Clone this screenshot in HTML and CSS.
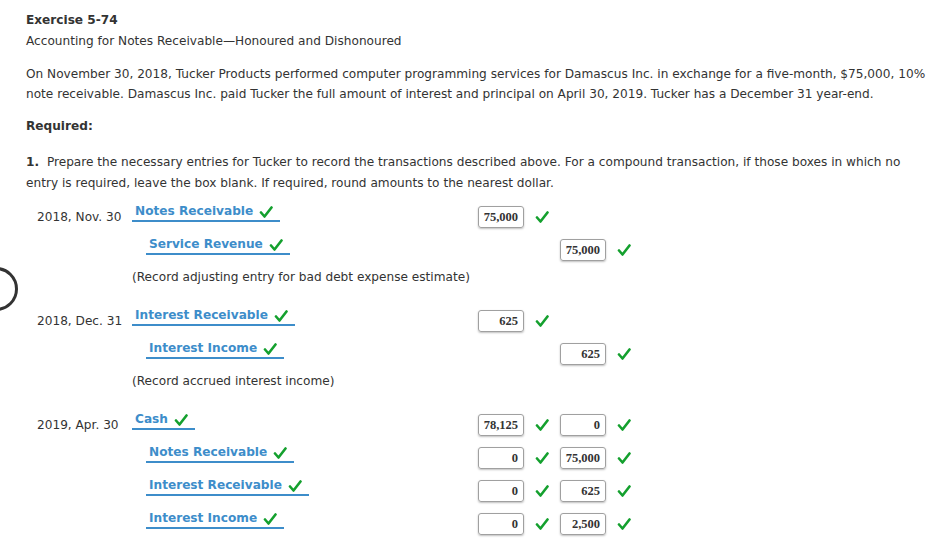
FILE: index.html
```html
<!DOCTYPE html>
<html>
<head>
<meta charset="utf-8">
<link rel="stylesheet" href="styles.css">
</head>
<body>
<div class="page">
  <div class="title">Exercise 5-74</div>
  <div class="subtitle">Accounting for Notes Receivable—Honoured and Dishonoured</div>
  <p class="para">On November 30, 2018, Tucker Products performed computer programming services for Damascus Inc. in exchange for a five-month, $75,000, 10% note receivable. Damascus Inc. paid Tucker the full amount of interest and principal on April 30, 2019. Tucker has a December 31 year-end.</p>
  <div class="required">Required:</div>
  <p class="para instr"><b class="num">1.</b> Prepare the necessary entries for Tucker to record the transactions described above. For a compound transaction, if those boxes in which no entry is required, leave the box blank. If required, round amounts to the nearest dollar.</p>

  <div class="journal">
    <div class="row">
      <div class="date">2018, Nov. 30</div>
      <div class="acct"><span class="acc">Notes Receivable<svg class="ck" viewBox="0 0 14 14"><path d="M2 7.5 L5.5 11.5 L12.5 2.5"/></svg></span></div>
      <div class="amt"><span class="box">75,000</span><svg class="ck" viewBox="0 0 14 14"><path d="M2 7.5 L5.5 11.5 L12.5 2.5"/></svg></div>
      <div class="amt"></div>
    </div>
    <div class="row">
      <div class="date"></div>
      <div class="acct cr"><span class="acc">Service Revenue<svg class="ck" viewBox="0 0 14 14"><path d="M2 7.5 L5.5 11.5 L12.5 2.5"/></svg></span></div>
      <div class="amt"></div>
      <div class="amt"><span class="box">75,000</span><svg class="ck" viewBox="0 0 14 14"><path d="M2 7.5 L5.5 11.5 L12.5 2.5"/></svg></div>
    </div>
    <div class="memo">(Record adjusting entry for bad debt expense estimate)</div>

    <div class="row">
      <div class="date">2018, Dec. 31</div>
      <div class="acct"><span class="acc">Interest Receivable<svg class="ck" viewBox="0 0 14 14"><path d="M2 7.5 L5.5 11.5 L12.5 2.5"/></svg></span></div>
      <div class="amt"><span class="box">625</span><svg class="ck" viewBox="0 0 14 14"><path d="M2 7.5 L5.5 11.5 L12.5 2.5"/></svg></div>
      <div class="amt"></div>
    </div>
    <div class="row">
      <div class="date"></div>
      <div class="acct cr"><span class="acc">Interest Income<svg class="ck" viewBox="0 0 14 14"><path d="M2 7.5 L5.5 11.5 L12.5 2.5"/></svg></span></div>
      <div class="amt"></div>
      <div class="amt"><span class="box">625</span><svg class="ck" viewBox="0 0 14 14"><path d="M2 7.5 L5.5 11.5 L12.5 2.5"/></svg></div>
    </div>
    <div class="memo">(Record accrued interest income)</div>

    <div class="row">
      <div class="date">2019, Apr. 30</div>
      <div class="acct"><span class="acc">Cash<svg class="ck" viewBox="0 0 14 14"><path d="M2 7.5 L5.5 11.5 L12.5 2.5"/></svg></span></div>
      <div class="amt"><span class="box">78,125</span><svg class="ck" viewBox="0 0 14 14"><path d="M2 7.5 L5.5 11.5 L12.5 2.5"/></svg></div>
      <div class="amt"><span class="box">0</span><svg class="ck" viewBox="0 0 14 14"><path d="M2 7.5 L5.5 11.5 L12.5 2.5"/></svg></div>
    </div>
    <div class="row">
      <div class="date"></div>
      <div class="acct cr"><span class="acc">Notes Receivable<svg class="ck" viewBox="0 0 14 14"><path d="M2 7.5 L5.5 11.5 L12.5 2.5"/></svg></span></div>
      <div class="amt"><span class="box">0</span><svg class="ck" viewBox="0 0 14 14"><path d="M2 7.5 L5.5 11.5 L12.5 2.5"/></svg></div>
      <div class="amt"><span class="box">75,000</span><svg class="ck" viewBox="0 0 14 14"><path d="M2 7.5 L5.5 11.5 L12.5 2.5"/></svg></div>
    </div>
    <div class="row">
      <div class="date"></div>
      <div class="acct cr"><span class="acc">Interest Receivable<svg class="ck" viewBox="0 0 14 14"><path d="M2 7.5 L5.5 11.5 L12.5 2.5"/></svg></span></div>
      <div class="amt"><span class="box">0</span><svg class="ck" viewBox="0 0 14 14"><path d="M2 7.5 L5.5 11.5 L12.5 2.5"/></svg></div>
      <div class="amt"><span class="box">625</span><svg class="ck" viewBox="0 0 14 14"><path d="M2 7.5 L5.5 11.5 L12.5 2.5"/></svg></div>
    </div>
    <div class="row">
      <div class="date"></div>
      <div class="acct cr"><span class="acc">Interest Income<svg class="ck" viewBox="0 0 14 14"><path d="M2 7.5 L5.5 11.5 L12.5 2.5"/></svg></span></div>
      <div class="amt"><span class="box">0</span><svg class="ck" viewBox="0 0 14 14"><path d="M2 7.5 L5.5 11.5 L12.5 2.5"/></svg></div>
      <div class="amt"><span class="box">2,500</span><svg class="ck" viewBox="0 0 14 14"><path d="M2 7.5 L5.5 11.5 L12.5 2.5"/></svg></div>
    </div>
  </div>
  <div class="footer"></div>
  <div class="ring"></div>
</div>
</body>
</html>
```

FILE: styles.css
```css
html, body {
  margin: 0;
  padding: 0;
  background: #fff;
}
.page {
  position: relative;
  width: 932px;
  height: 544px;
  overflow: hidden;
  font-family: "DejaVu Sans", Verdana, sans-serif;
  font-size: 12.13px;
  color: #333;
}
.title {
  font-weight: bold;
  padding: 10px 0 0 26px;
  line-height: 20px;
}
.subtitle {
  padding-left: 26px;
  line-height: 20px;
  margin-top: 1px;
}
.para {
  margin: 13px 0 0 0;
  padding-left: 26px;
  padding-right: 4px;
  line-height: 20px;
}
.required {
  font-weight: bold;
  padding-left: 26px;
  line-height: 20px;
  margin-top: 12px;
}
.instr {
  margin-top: 16px;
  line-height: 21px;
}
.num {
  padding-right: 4px;
}
.journal {
  margin-top: 6px;
}
.row {
  display: flex;
  align-items: center;
  height: 33px;
}
.date {
  width: 95px;
  padding-left: 37px;
  flex: none;
}
.acct {
  width: 346px;
  flex: none;
  align-self: flex-start;
  padding-top: 2px;
}
.acct.cr {
  padding-left: 14px;
  width: 332px;
}
.acc {
  display: inline-flex;
  align-items: center;
  color: #3d8dca;
  font-weight: bold;
  padding: 0 7px 1px 3px;
  border-bottom: 2px solid #3d8dca;
  line-height: 16px;
}
.acc .ck {
  margin-left: 6px;
  margin-top: 3px;
}
.amt {
  width: 82px;
  flex: none;
  display: flex;
  align-items: center;
}
.box {
  display: inline-block;
  box-sizing: border-box;
  width: 46px;
  height: 22px;
  border: 1px solid #a0a0a0;
  border-radius: 3px;
  box-shadow: 0 1px 2px rgba(0,0,0,0.25);
  font-family: "Liberation Serif", "Times New Roman", serif;
  font-weight: bold;
  font-size: 12.5px;
  line-height: 20px;
  text-align: right;
  padding-right: 5px;
  color: #333;
}
.amt .ck {
  margin-left: 11px;
}
.ck {
  width: 14px;
  height: 14px;
  flex: none;
}
.ck path {
  fill: none;
  stroke: #14a02e;
  stroke-width: 2.6;
  stroke-linecap: round;
  stroke-linejoin: round;
}
.memo {
  padding-left: 132px;
  line-height: 20px;
  height: 38px;
  padding-top: 1px;
  box-sizing: border-box;
}
.footer {
  margin-top: 6px;
  height: 10px;
  background: #f5f5f5;
}
.ring {
  position: absolute;
  left: -26px;
  top: 267px;
  width: 38px;
  height: 38px;
  border: 3px solid #333;
  border-radius: 50%;
}
```
